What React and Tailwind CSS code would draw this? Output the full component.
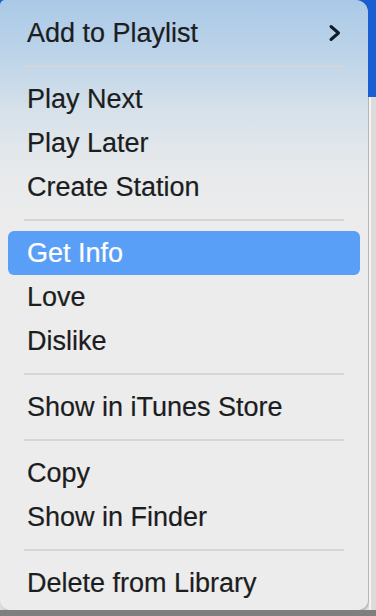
import React from 'react';

const groups = [
    [{ label: 'Add to Playlist', submenu: true }],
    [{ label: 'Play Next' }, { label: 'Play Later' }, { label: 'Create Station' }],
    [{ label: 'Get Info', active: true }, { label: 'Love' }, { label: 'Dislike' }],
    [{ label: 'Show in iTunes Store' }],
    [{ label: 'Copy' }, { label: 'Show in Finder' }],
    [{ label: 'Delete from Library' }],
];

const Chevron = () => (
    <svg width="14" height="18" viewBox="0 0 14 18" fill="none">
        <path d="M3 2.5 L10.5 9 L3 15.5" stroke="#121c26" strokeWidth="3" strokeLinecap="round" strokeLinejoin="round" />
    </svg>
);

const MenuItem = ({ label, submenu, active }) => (
    <div
        className={`flex items-center justify-between h-[44px] pl-[19px] pr-[18px] rounded-[6px] text-[27px] leading-none ${
            active ? 'bg-[#5a9ff7] text-white' : 'text-[#1b1d20]'
        }`}
    >
        <span className="[-webkit-text-stroke:0.2px_currentColor]">{label}</span>
        {submenu && <Chevron />}
    </div>
);

const Separator = () => (
    <div className="h-[22px] flex items-center mx-[16px]">
        <div className="h-[2px] w-full bg-[#d5d6d7]"></div>
    </div>
);

export default function App() {
    return (
        <div className="w-[376px] h-[616px] flex flex-col bg-[#858585] overflow-hidden font-['Liberation_Sans',Arial,sans-serif]">
            <div className="flex h-[610px] bg-[linear-gradient(to_bottom,#1a5ed2_0px,#1a5ed2_97px,#dedede_97px)]">
                {/* Menu */}
                <div className="w-[368px] h-[610px] rounded-tl-[5px] rounded-tr-[12px] rounded-b-[10px] px-[8px] pt-[11px] pb-[5px] shadow-[1px_1px_2px_rgba(0,0,0,0.25)] bg-[linear-gradient(to_bottom,#aac9e7_0px,#bfd5e9_60px,#d6e1ea_110px,#e6e9eb_165px,#ececec_220px)]">
                    {groups.map((group, i) => (
                        <React.Fragment key={i}>
                            {i > 0 && <Separator />}
                            {group.map((item) => (
                                <MenuItem key={item.label} {...item} />
                            ))}
                        </React.Fragment>
                    ))}
                </div>
                {/* Window edge behind */}
                <div className="flex-1 flex flex-col">
                    <div className="h-[97px] bg-[#1a5ed2]"></div>
                    <div className="flex-1 ml-[1px] border-l-2 border-[#f4f4f4] bg-[#dcdcdc]"></div>
                </div>
            </div>
            <div className="h-[6px] bg-[#7f7f7f]"></div>
        </div>
    );
}
